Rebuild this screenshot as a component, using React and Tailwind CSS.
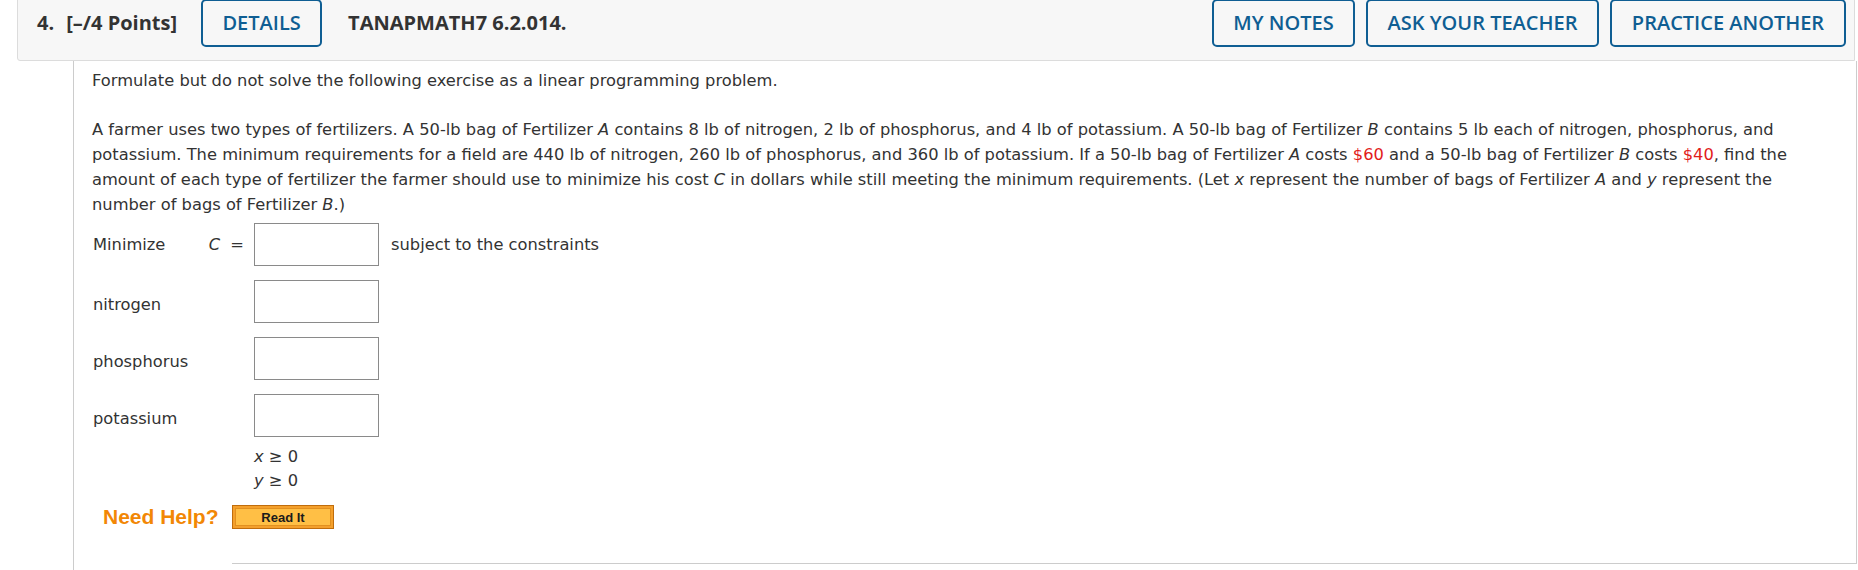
const headerButtons = [
  { label: 'MY NOTES', w: 'w-[143px]' },
  { label: 'ASK YOUR TEACHER', w: 'w-[233px]' },
  { label: 'PRACTICE ANOTHER', w: 'w-[236px]' },
];

const constraints = ['nitrogen', 'phosphorus', 'potassium'];

function OutlineButton({ label, w }) {
  return (
    <button
      type="button"
      className={`${w} h-[48px] shrink-0 rounded-[5px] border-2 border-[#0f5e93] text-[#0f5e93] text-[20px] font-semibold flex items-center justify-center`}
    >
      {label}
    </button>
  );
}

function AnswerBox() {
  return <input type="text" className="w-[125px] h-[43px] border border-[#8a8a8a] bg-white outline-none" />;
}

function ReadIt() {
  return (
    <button
      type="button"
      className="w-[102px] h-[24px] border border-[#c06d0c] bg-[#f4a02c] p-[2px] flex"
    >
      <span className="flex-1 bg-[#ffbf45] border border-[#e2901f] flex items-center justify-center font-['Liberation_Sans',Arial,sans-serif] font-bold text-[13px] text-[#1b1b1b] leading-none">
        Read It
      </span>
    </button>
  );
}

export default function App() {
  return (
    <div className="w-[1858px] h-[570px] overflow-hidden bg-white">
      {/* question header */}
      <div className="ml-[17px] mr-[3px] -mt-[2px] h-[63px] bg-[#f7f7f7] border border-[#dcdcdc] rounded-bl-[3px] flex items-start pl-[19px] pr-[8px] font-['Open_Sans',sans-serif] text-[#333]">
        <div className="h-[48px] flex items-center text-[20px] font-bold">
          <span>4.</span>
          <span className="ml-[12px]">[–/4 Points]</span>
        </div>
        <div className="ml-[24px]">
          <OutlineButton label="DETAILS" w="w-[121px]" />
        </div>
        <div className="ml-[26px] h-[48px] flex items-center text-[20px] font-bold">
          TANAPMATH7 6.2.014.
        </div>
        <div className="ml-auto flex gap-[11px]">
          {headerButtons.map((b) => (
            <OutlineButton key={b.label} label={b.label} w={b.w} />
          ))}
        </div>
      </div>

      {/* question body */}
      <div className="ml-[73px] h-[509px] border-l border-[#cccccc]">
        <div className="mr-px h-[503px] border-r border-[#cccccc] flex flex-col font-['DejaVu_Sans',Verdana,sans-serif] text-[16.3px] leading-[25px] text-[#333]">
          <div className="pl-[18px] pr-[28px] pt-[7px]">
            <p>Formulate but do not solve the following exercise as a linear programming problem.</p>
            <p className="mt-[24px]">
              A farmer uses two types of fertilizers. A 50-lb bag of Fertilizer <i>A</i> contains 8 lb of nitrogen, 2 lb of
              phosphorus, and 4 lb of potassium. A 50-lb bag of Fertilizer <i>B</i> contains 5 lb each of nitrogen,
              phosphorus, and potassium. The minimum requirements for a field are 440 lb of nitrogen, 260 lb of phosphorus,
              and 360 lb of potassium. If a 50-lb bag of Fertilizer <i>A</i> costs <span className="text-[#e21b1b]">$60</span> and
              a 50-lb bag of Fertilizer <i>B</i> costs <span className="text-[#e21b1b]">$40</span>, find the amount of each type
              of fertilizer the farmer should use to minimize his cost <i>C</i> in dollars while still meeting the minimum
              requirements. (Let <i>x</i> represent the number of bags of Fertilizer <i>A</i> and <i>y</i> represent the
              number of bags of Fertilizer <i>B</i>.)
            </p>

            <div className="mt-[6px] flex items-center h-[43px]">
              <div className="w-[162px] pl-px pr-[10px] flex justify-between">
                <span>Minimize</span>
                <span>
                  <i>C</i>&nbsp; =
                </span>
              </div>
              <AnswerBox />
              <span className="ml-[12px]">subject to the constraints</span>
            </div>

            {constraints.map((c) => (
              <div key={c} className="mt-[14px] flex items-center h-[43px]">
                <div className="w-[162px] pl-px pt-[6px]">{c}</div>
                <AnswerBox />
              </div>
            ))}

            <div className="mt-[8px] pl-[162px] leading-[24px]">
              <div>
                <i>x</i> ≥ 0
              </div>
              <div>
                <i>y</i> ≥ 0
              </div>
            </div>

            <div className="mt-[12px] flex items-center">
              <span className="ml-[11px] w-[129px] font-['Liberation_Sans',Arial,sans-serif] font-bold text-[21px] leading-[24px] text-[#f28705]">
                Need Help?
              </span>
              <ReadIt />
            </div>
          </div>
          <div className="mt-auto ml-[158px] border-b border-[#cccccc]" />
        </div>
      </div>
    </div>
  );
}
